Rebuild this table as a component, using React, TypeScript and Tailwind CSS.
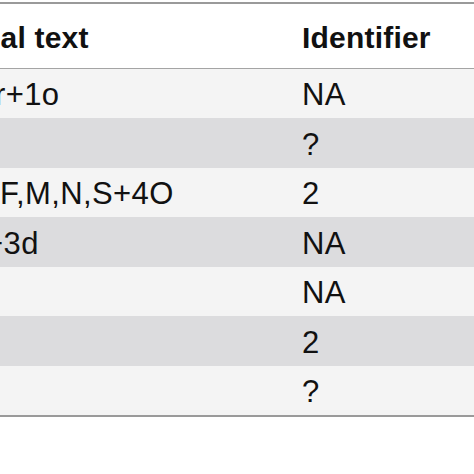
import React from "react";

type Row = { left: React.ReactNode; right: string; dark: boolean };

const rows: Row[] = [
  {
    left: <span className="ml-[-5px]">r+1o</span>,
    right: "NA",
    dark: false,
  },
  { left: <span />, right: "?", dark: true },
  {
    left: <span className="ml-[0px]">F,M,N,S+4O</span>,
    right: "2",
    dark: false,
  },
  {
    left: <span className="ml-[-15px]">+3d</span>,
    right: "NA",
    dark: true,
  },
  { left: <span />, right: "NA", dark: false },
  { left: <span />, right: "2", dark: true },
  { left: <span />, right: "?", dark: false },
];

export default function App() {
  return (
    <div
      className="w-[474px] h-[474px] bg-white overflow-hidden text-[#111]"
      style={{ fontFamily: '"Liberation Sans", Arial, Helvetica, sans-serif' }}
    >
      <div className="h-[2px]" />
      <div className="h-[2px] bg-[#9a9a9a]" />
      <div className="h-[64px] flex items-center pt-[2px] font-bold bg-white text-[30px] tracking-[0.2px]">
        <div className="w-[302px] overflow-hidden whitespace-nowrap">
          <span className="ml-[-89px]">Original text</span>
        </div>
        <div className="whitespace-nowrap">Identifier</div>
      </div>
      <div className="h-[1px] bg-[#a4a4a4]" />
      {rows.map((r, i) => (
        <div
          key={i}
          className={
            "flex items-center pt-[4px] text-[31px] tracking-[0.4px] " +
            (i % 2 === 0 ? "h-[49px] " : "h-[50px] ") +
            (r.dark ? "bg-[#dcdcde]" : "bg-[#f4f4f4]")
          }
        >
          <div className="w-[302px] overflow-hidden whitespace-nowrap flex">
            {r.left}
          </div>
          <div className="whitespace-nowrap">{r.right}</div>
        </div>
      ))}
      <div className="h-[2px] bg-[#9a9a9a]" />
    </div>
  );
}
